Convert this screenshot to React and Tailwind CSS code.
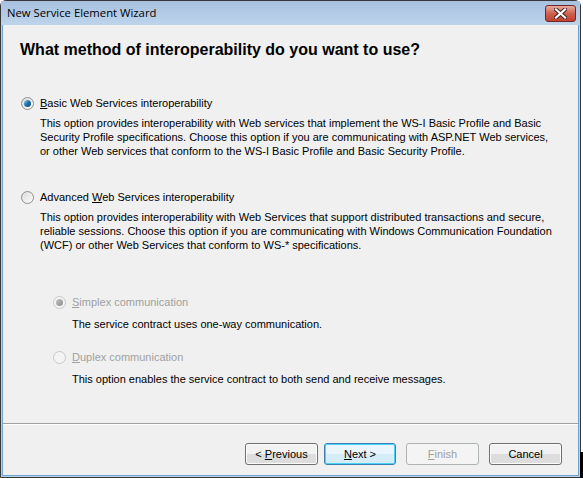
import React from 'react';

const font = { fontFamily: '"Liberation Sans", Arial, sans-serif' };

// underlined access key
function Key({ children }) {
  return <span className="underline underline-offset-[1px]">{children}</span>;
}

function Radio({ checked, disabled }) {
  return (
    <span
      className={`relative inline-flex h-[13px] w-[13px] shrink-0 items-center justify-center rounded-full border ${
        disabled ? 'border-[#c8c8c8] bg-[#f4f4f4]' : 'border-[#8e8f8f] bg-gradient-to-br from-[#dcdcdc] to-[#fbfbfb]'
      }`}
    >
      {checked && (
        <span
          className={`h-[7px] w-[7px] rounded-full ${
            disabled
              ? 'bg-gradient-to-br from-[#c2c2c2] to-[#8c8c8c]'
              : 'bg-gradient-to-br from-[#8ad0f4] via-[#1d6fa8] to-[#0d4f86]'
          }`}
        />
      )}
    </span>
  );
}

function Option({ label, checked, disabled, children, indent }) {
  return (
    <div className={indent ? 'pl-[50px]' : 'pl-[18px]'}>
      <div className="flex h-[14px] items-center gap-[6px]">
        <Radio checked={checked} disabled={disabled} />
        <span className={`leading-[14px] ${disabled ? 'text-[#a0a0a0]' : 'text-black'}`}>{label}</span>
      </div>
      <p className={`pl-[19px] leading-[14px] text-black ${indent ? 'mt-[8px]' : 'mt-[6px]'}`}>{children}</p>
    </div>
  );
}

function Button({ children, primary, disabled, w = 'w-[73px]' }) {
  return (
    <button
      className={`h-[22px] ${w} rounded-[3px] border text-[11px] leading-none ${
        disabled
          ? 'border-[#adb2b5] bg-[#f4f4f4] text-[#a0a0a0]'
          : primary
          ? 'border-[#3c7fb1] bg-gradient-to-b from-[#eaf6fd] from-50% to-[#d6ecf8] to-50% text-black shadow-[inset_0_0_0_1px_#48d4fa]'
          : 'border-[#707070] bg-gradient-to-b from-[#f2f2f2] from-50% to-[#dddddd] to-50% text-black shadow-[inset_0_0_0_1px_#fcfcfc]'
      }`}
      style={font}
    >
      {children}
    </button>
  );
}

export default function App() {
  return (
    <div className="relative h-[478px] w-[583px] overflow-hidden bg-white text-[11px]" style={font}>
      <div className="flex h-[478px] w-[581px] flex-col rounded-t-[6px] border border-[#383838] bg-[#b9d1ea]">
        {/* title bar */}
        <div className="flex h-[24px] shrink-0 items-start justify-between bg-gradient-to-b from-[#a7c1df] to-[#bed4ec] pl-[6px] pr-[4px]">
          <span className="mt-[5px] leading-[14px] text-black" style={{ fontFamily: '"Open Sans", "Liberation Sans", sans-serif', fontSize: '11.3px' }}>
            New Service Element Wizard
          </span>
          <div className="mt-[4px] flex h-[17px] w-[31px] items-center justify-center rounded-[3px] border border-[#6d2828] bg-gradient-to-b from-[#e9a99b] via-[#d0604f] to-[#c1402d]">
            <svg width="13" height="11" viewBox="0 0 13 11">
              <path d="M2 1.5 L11 9.5 M11 1.5 L2 9.5" stroke="#3a2020" strokeWidth="4" strokeLinecap="square" />
              <path d="M2 1.5 L11 9.5 M11 1.5 L2 9.5" stroke="#ffffff" strokeWidth="2.2" strokeLinecap="square" />
            </svg>
          </div>
        </div>

        {/* client area */}
        <div className="mx-[1px] mb-[1px] flex flex-1 flex-col border-x border-b border-[#6ea2cf] bg-[#f0f0f0]">
          <h1 className="pl-[17px] pt-[15px] text-[16px] font-bold leading-[20px] text-black" style={font}>
            What method of interoperability do you want to use?
          </h1>

          <div className="mt-[36px] flex flex-col">
            <Option checked label={<><Key>B</Key>asic Web Services interoperability</>}>
              This option provides interoperability with Web services that implement the WS-I Basic Profile and Basic
              <br />
              Security Profile specifications. Choose this option if you are communicating with ASP.NET Web services,
              <br />
              or other Web services that conform to the WS-I Basic Profile and Basic Security Profile.
            </Option>

            <div className="mt-[32px]">
              <Option label={<>Advanced <Key>W</Key>eb Services interoperability</>}>
                This option provides interoperability with Web Services that support distributed transactions and secure,
                <br />
                reliable sessions. Choose this option if you are communicating with Windows Communication Foundation
                <br />
                (WCF) or other Web Services that conform to WS-* specifications.
              </Option>
            </div>

            <div className="mt-[43px]">
              <Option indent checked disabled label={<><Key>S</Key>implex communication</>}>
                The service contract uses one-way communication.
              </Option>
            </div>

            <div className="mt-[19px]">
              <Option indent disabled label={<><Key>D</Key>uplex communication</>}>
                This option enables the service contract to both send and receive messages.
              </Option>
            </div>
          </div>

          <div className="mt-auto">
            <div className="h-[2px] border-t border-[#a0a0a0] border-b-white" style={{ borderBottomWidth: 1 }} />
            <div className="flex justify-end pb-[10px] pr-[16px] pt-[18px]">
              <Button>&lt; <Key>P</Key>revious</Button>
              <div className="ml-[6px]">
                <Button primary w="w-[72px]"><Key>N</Key>ext &gt;</Button>
              </div>
              <div className="ml-[10px]">
                <Button disabled><Key>F</Key>inish</Button>
              </div>
              <div className="ml-[10px]">
                <Button>Cancel</Button>
              </div>
            </div>
          </div>
        </div>
      </div>
      <div className="absolute bottom-0 right-0 h-[26px] w-[3px] bg-black" />
    </div>
  );
}
